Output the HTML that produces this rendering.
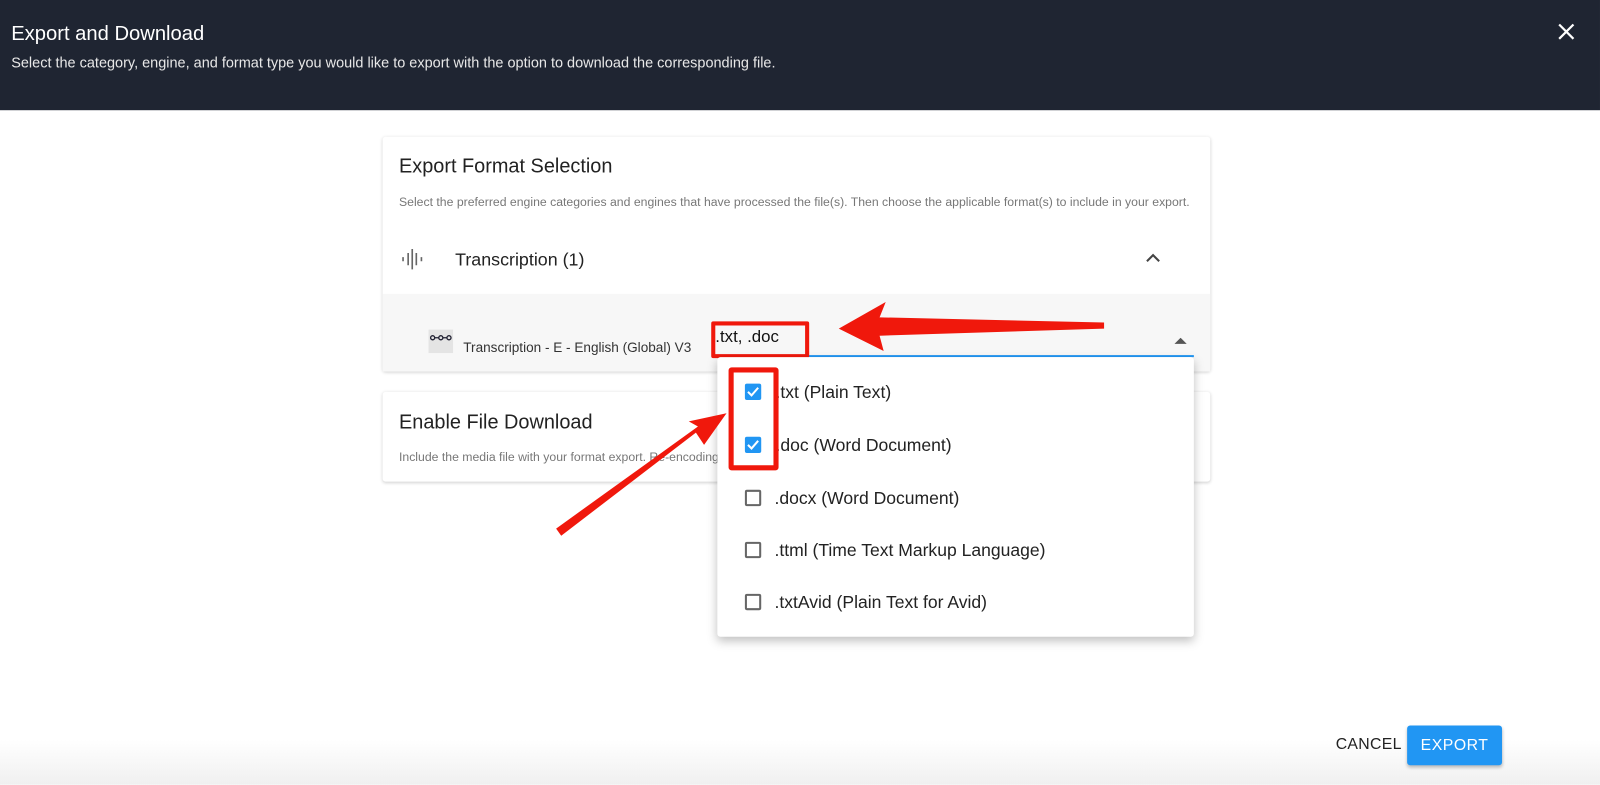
<!DOCTYPE html>
<html><head><style>
*{box-sizing:border-box;margin:0;padding:0}
body{width:1600px;height:784px;overflow:hidden;background:#fff;font-family:"Liberation Sans",sans-serif;position:relative;color:#222}
#w{position:absolute;left:0;top:0;width:1568px;height:769px;transform:scale(1.0204);transform-origin:0 0}
.hdr{position:absolute;left:0;top:0;width:1568px;height:108px;background:#1f2532;color:#fff}
.hdr h1{position:absolute;left:11px;top:22px;font-size:19.8px;font-weight:400}
.hdr p{position:absolute;left:11px;top:54px;font-size:14.2px;color:#e8e8e8}
.card{position:absolute;left:375px;width:811px;background:#fff;border-radius:3px;box-shadow:0 1px 3px rgba(0,0,0,.18)}
.abs{position:absolute}
.menu{position:absolute;left:703px;top:350px;width:467px;height:274px;background:#fff;box-shadow:0 4px 10px rgba(0,0,0,.25);border-radius:3px}
.item{position:absolute;left:28px;font-size:17.2px;color:#222}
.cb{position:absolute;left:27px;width:16px;height:16px;border-radius:2px}
.cb.on{background:#2196f3}
.cb.off{border:2px solid #666}
</style></head><body><div id="w">
<div class="hdr"><h1>Export and Download</h1><p>Select the category, engine, and format type you would like to export with the option to download the corresponding file.</p>
<svg class="abs" style="left:1526px;top:22px" width="18" height="18"><path d="M2 2L16 16M16 2L2 16" stroke="#fff" stroke-width="2.2"/></svg></div>
<div style="position:absolute;left:0;top:725px;width:1568px;height:44px;background:linear-gradient(#fff,#f0f0f0)"></div>

<div class="card" style="top:134px;height:230px">
 <div class="abs" style="left:16px;top:18px;font-size:19.5px">Export Format Selection</div>
 <div class="abs" style="left:16px;top:57px;font-size:12px;color:#777">Select the preferred engine categories and engines that have processed the file(s). Then choose the applicable format(s) to include in your export.</div>
 <svg class="abs" style="left:18px;top:108px" width="24" height="24"><g stroke="#666" stroke-width="1.6"><path d="M2 10v4M7 6v12M11 2v20M15 6v12M20 10v4"/></g></svg>
 <div class="abs" style="left:71px;top:110px;font-size:17.5px">Transcription (1)</div>
 <svg class="abs" style="left:748px;top:114px" width="14" height="10"><path d="M1 8L7 2L13 8" stroke="#444" stroke-width="2" fill="none"/></svg>
 <div class="abs" style="left:0;top:154px;width:811px;height:76px;background:#f7f7f7"></div>
 <div class="abs" style="left:45px;top:189px;width:24px;height:23px;background:#e4e4e4"></div>
 <svg class="abs" style="left:46px;top:193px" width="22" height="8"><g stroke="#223" stroke-width="1.3" fill="none"><circle cx="3" cy="4" r="2"/><circle cx="11" cy="4" r="2"/><circle cx="19" cy="4" r="2"/><path d="M5 4h4M13 4h4"/></g></svg>
 <div class="abs" style="left:79px;top:199px;font-size:13.3px;color:#333">Transcription - E - English (Global) V3</div>
 <div class="abs" style="left:328px;top:214px;width:467px;height:1.5px;background:#2196f3"></div>
 <svg class="abs" style="left:776px;top:197px" width="12" height="7"><path d="M0 6L6 0L12 6Z" fill="#555"/></svg>
</div>
<div class="abs" style="left:701px;top:321px;font-size:16.5px;color:#111">.txt, .doc</div>
<div class="abs" style="left:697px;top:315px;width:96px;height:36px;border:4px solid #f0180c;border-radius:2px"></div>

<div class="card" style="top:384px;height:88px">
 <div class="abs" style="left:16px;top:19px;font-size:19.5px">Enable File Download</div>
 <div class="abs" style="left:16px;top:57px;font-size:12px;color:#777">Include the media file with your format export. Re-encoding</div>
</div>

<div class="menu">
 <div class="cb on" style="top:26px"></div><svg class="abs" style="left:29px;top:29px" width="12" height="10"><path d="M1 5l3.5 3.5L11 1" stroke="#fff" stroke-width="2" fill="none"/></svg>
 <div class="item" style="left:57px;top:24px">.txt (Plain Text)</div>
 <div class="cb on" style="top:78px"></div><svg class="abs" style="left:29px;top:81px" width="12" height="10"><path d="M1 5l3.5 3.5L11 1" stroke="#fff" stroke-width="2" fill="none"/></svg>
 <div class="item" style="left:57px;top:76px">.doc (Word Document)</div>
 <div class="cb off" style="top:130px"></div>
 <div class="item" style="left:56px;top:128px">.docx (Word Document)</div>
 <div class="cb off" style="top:181px"></div>
 <div class="item" style="left:56px;top:179px">.ttml (Time Text Markup Language)</div>
 <div class="cb off" style="top:232px"></div>
 <div class="item" style="left:56px;top:230px">.txtAvid (Plain Text for Avid)</div>
</div>
<div class="abs" style="left:714px;top:360px;width:49px;height:101px;border:5px solid #f0180c;border-radius:3px"></div>

<svg class="abs" style="left:0;top:0" width="1568" height="769">
 <polygon points="1082,316 862,311 868,296 822,322 866,344 862,329 1082,322" fill="#f0180c"/>
 <polygon points="545,518 550,525 682,424 690,436 712,405 675,413 684,418" fill="#f0180c"/>
</svg>

<div class="abs" style="left:1309px;top:721px;font-size:15.5px;letter-spacing:.3px;color:#222">CANCEL</div>
<div class="abs" style="left:1379px;top:711px;width:93px;height:39px;background:#2196f3;border-radius:3px;box-shadow:0 2px 3px rgba(0,0,0,.25);color:#fff;font-size:15.5px;text-align:center;line-height:39px;letter-spacing:.5px">EXPORT</div>
</div></body></html>
